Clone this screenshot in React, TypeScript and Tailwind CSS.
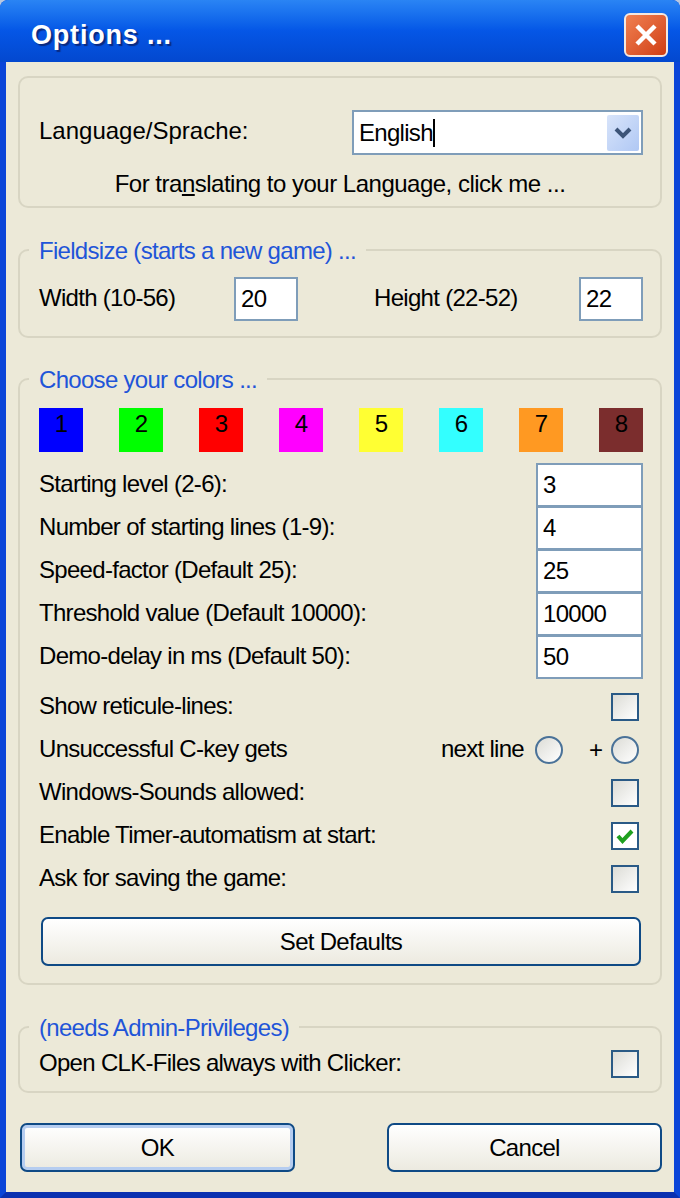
import React from "react";

const swatches = [
  { n: 1, cls: "bg-[#0000ff]" },
  { n: 2, cls: "bg-[#00ff00]" },
  { n: 3, cls: "bg-[#ff0000]" },
  { n: 4, cls: "bg-[#ff00ff]" },
  { n: 5, cls: "bg-[#ffff33]" },
  { n: 6, cls: "bg-[#33ffff]" },
  { n: 7, cls: "bg-[#ff9922]" },
  { n: 8, cls: "bg-[#7b2d2d]" },
];

const numberRows = [
  { label: "Starting level (2-6):", value: "3" },
  { label: "Number of starting lines (1-9):", value: "4" },
  { label: "Speed-factor (Default 25):", value: "25" },
  { label: "Threshold value (Default 10000):", value: "10000" },
  { label: "Demo-delay in ms (Default 50):", value: "50" },
];

function Group({ legend, className, children }: { legend?: string; className: string; children: React.ReactNode }) {
  return (
    <div className={`relative rounded-[10px] border-2 border-[#d8d5c3] ${className}`}>
      {legend && (
        <span className="absolute left-[9px] top-[-14px] bg-[#ece9d8] px-[10px] leading-[28px] text-[#1f55d8]">{legend}</span>
      )}
      {children}
    </div>
  );
}

function Checkbox({ checked }: { checked?: boolean }) {
  return (
    <div className={`flex h-[28px] w-[28px] items-center justify-center border-2 border-[#2a5a86] ${checked ? "bg-white" : "bg-gradient-to-br from-[#dcdcd6] to-white"}`}>
      {checked && (
        <svg width="18" height="16" viewBox="0 0 18 16">
          <path d="M2 8l4.5 5L16 3" fill="none" stroke="#1fa01f" strokeWidth="4" />
        </svg>
      )}
    </div>
  );
}

function Radio() {
  return <div className="h-[28px] w-[28px] rounded-full border-2 border-[#4a7298] bg-gradient-to-br from-[#dcdcd6] to-white" />;
}

function Row({ label, children }: { label: string; children: React.ReactNode }) {
  return (
    <div className="flex h-[43px] items-center justify-between pr-[21px]">
      <span className="mt-[-2px]">{label}</span>
      {children}
    </div>
  );
}

function XpButton({ label, focused, className }: { label: string; focused?: boolean; className: string }) {
  return (
    <button
      className={`rounded-[7px] border-2 border-[#0f4a85] bg-gradient-to-b from-white to-[#eceae0] ${focused ? "shadow-[inset_0_0_0_3px_#b6cdf0]" : ""} ${className}`}
    >
      {label}
    </button>
  );
}

export default function App() {
  return (
    <div
      className="h-[1198px] w-[680px] overflow-hidden bg-[#b8c8e0] text-[24px] tracking-[-0.7px] text-black"
      style={{ fontFamily: '"Liberation Sans", Arial, sans-serif' }}
    >
      <div className="flex h-full flex-col rounded-t-[8px] border-x-[6px] border-b-[6px] border-x-[#0a45d8] border-b-[#0a30b0] bg-[#0a45d8]">
        <div className="mx-[-6px] flex h-[62px] shrink-0 items-center justify-between rounded-t-[8px] bg-gradient-to-b from-[#2a84f4] via-[#0556e6] to-[#0348cf] pl-[31px] pr-[12px]">
          <span className="mt-[8px] text-[27px] font-bold tracking-[0.8px] text-white [text-shadow:2px_2px_1px_#0a2a80]">Options ...</span>
          <div className="mt-[7px] flex h-[44px] w-[44px] items-center justify-center rounded-[6px] border-2 border-[#f4e8e0] bg-gradient-to-br from-[#f08050] to-[#d03c10]">
            <svg width="28" height="28" viewBox="0 0 28 28">
              <path d="M5 5l18 18M23 5L5 23" stroke="white" strokeWidth="4.5" />
            </svg>
          </div>
        </div>

        <div className="flex flex-1 flex-col bg-[#ece9d8] px-[12px] pt-[14px]">
          <Group className="h-[132px]">
            <div className="flex items-center pl-[19px] pr-[17px] pt-[32px]">
              <span className="mt-[-3px] w-[313px] tracking-[0px]">Language/Sprache:</span>
              <div className="flex h-[45px] flex-1 items-center justify-between border-2 border-[#7f9db9] bg-white pl-[5px] pr-[2px]">
                <span className="border-r-2 border-black leading-[28px]">English</span>
                <div className="flex h-[36px] w-[32px] items-center justify-center rounded-[2px] bg-gradient-to-br from-[#d8e4fa] to-[#b0c8f4]">
                  <svg width="20" height="14" viewBox="0 0 20 14">
                    <path d="M3 3l7 7 7-7" fill="none" stroke="#3c5478" strokeWidth="4" />
                  </svg>
                </div>
              </div>
            </div>
            <p className="mt-[15px] text-center leading-[28px] tracking-[-0.5px]">
              For tra<span className="underline">n</span>slating to your Language, click me ...
            </p>
          </Group>

          <Group legend="Fieldsize (starts a new game) ..." className="mt-[41px] h-[89px]">
            <div className="flex items-center justify-between pl-[19px] pr-[17px] pt-[26px]">
              <div className="flex items-center">
                <span className="mt-[-2px] w-[195px]">Width (10-56)</span>
                <div className="flex h-[44px] w-[64px] items-center border-2 border-[#7f9db9] bg-white pl-[5px]">20</div>
              </div>
              <div className="flex items-center">
                <span className="mt-[-2px] w-[205px]">Height (22-52)</span>
                <div className="flex h-[44px] w-[64px] items-center border-2 border-[#7f9db9] bg-white pl-[5px]">22</div>
              </div>
            </div>
          </Group>

          <Group legend="Choose your colors ..." className="mt-[40px] h-[607px] pl-[19px]">
            <div className="flex justify-between pr-[17px] pt-[28px]">
              {swatches.map((s) => (
                <div key={s.n} className={`flex h-[44px] w-[44px] justify-center leading-[32px] ${s.cls}`}>
                  {s.n}
                </div>
              ))}
            </div>
            <div className="mt-[11px] flex flex-col pr-[17px]">
              {numberRows.map((r) => (
                <div key={r.label} className="flex h-[43px] items-center justify-between">
                  <span className="mt-[-2px]">{r.label}</span>
                  <div className="flex h-[44px] w-[107px] items-center border-2 border-[#7f9db9] bg-white pl-[5px]">{r.value}</div>
                </div>
              ))}
            </div>
            <div className="mt-[7px] flex flex-col">
              <Row label="Show reticule-lines:">
                <Checkbox />
              </Row>
              <Row label="Unsuccessful C-key gets">
                <div className="flex items-center">
                  <span className="mt-[-2px]">next line</span>
                  <div className="ml-[11px]">
                    <Radio />
                  </div>
                  <span className="ml-[26px] mr-[11px] w-[11px]">+</span>
                  <Radio />
                </div>
              </Row>
              <Row label="Windows-Sounds allowed:">
                <Checkbox />
              </Row>
              <Row label="Enable Timer-automatism at start:">
                <Checkbox checked />
              </Row>
              <Row label="Ask for saving the game:">
                <Checkbox />
              </Row>
            </div>
            <XpButton label="Set Defaults" className="ml-[2px] mt-[17px] h-[49px] w-[600px]" />
          </Group>

          <Group legend="(needs Admin-Privileges)" className="mt-[41px] h-[67px] pl-[19px]">
            <div className="pt-[14px]">
              <Row label="Open CLK-Files always with Clicker:">
                <Checkbox />
              </Row>
            </div>
          </Group>

          <div className="mt-[30px] flex justify-between pl-[2px]">
            <XpButton label="OK" focused className="h-[49px] w-[275px]" />
            <XpButton label="Cancel" className="h-[49px] w-[275px]" />
          </div>
        </div>
      </div>
    </div>
  );
}
